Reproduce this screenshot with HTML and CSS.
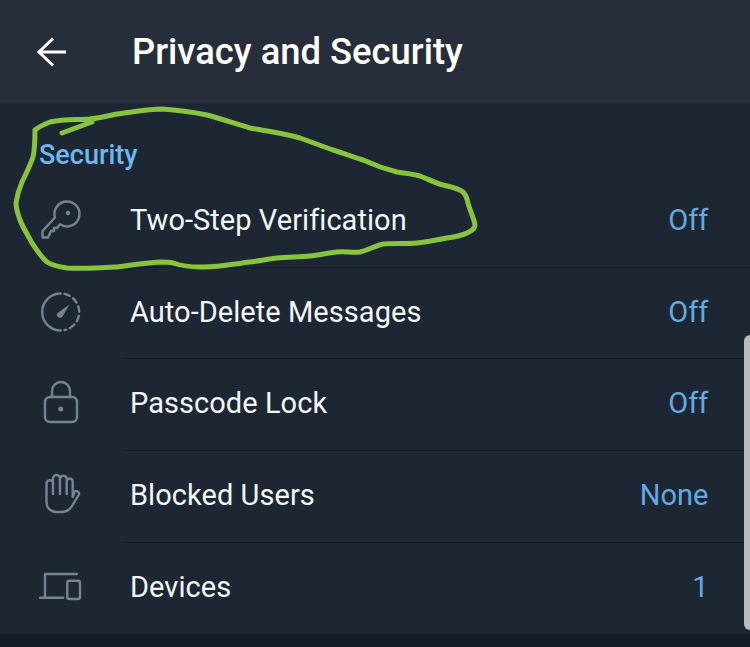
FILE: index.html
```html
<!DOCTYPE html>
<html lang="en">
<head>
<meta charset="utf-8">
<title>Privacy and Security</title>
<link rel="stylesheet" href="styles.css">
</head>
<body>
<div class="screen">
  <header class="topbar">
    <svg class="back" viewBox="0 0 32 32" aria-hidden="true"><path d="M2 16H30M17 2.500 3 16l14 13.500"/></svg>
    <h1 class="title">Privacy and Security</h1>
  </header>
  <main class="section">
    <h2 class="section-title">Security</h2>
    <div class="row">
      <svg class="icon" viewBox="0 0 44 48" aria-hidden="true"><path d="M21 26.300 18 30H15V33H12L9 39.500H3.500V33L16 19.500A12.500 12.500 0 1 1 21 26.300Z"/><circle class="fill" cx="29" cy="15" r="2.200"/></svg>
      <div class="row-body"><span class="label">Two-Step Verification</span><span class="value">Off</span></div>
    </div>
    <div class="row">
      <svg class="icon" viewBox="0 0 44 48" aria-hidden="true"><path d="M21.700 3.500A18.500 18.500 0 0 0 21.700 40.500"/><path stroke-dasharray="5.500 4.200" d="M25.500 3.900A18.500 18.500 0 0 1 25.500 40.100"/><path class="fill" d="M30.500 14.500 23.500 26.500A3 3 0 0 1 18.500 23Z"/></svg>
      <div class="row-body"><span class="label">Auto-Delete Messages</span><span class="value">Off</span></div>
    </div>
    <div class="row">
      <svg class="icon" viewBox="0 0 44 48" aria-hidden="true"><rect x="6" y="16" width="32" height="25" rx="5"/><path d="M13 16V10A9 9 0 0 1 31 10V16"/><circle class="fill" cx="21.700" cy="28" r="2.500"/></svg>
      <div class="row-body"><span class="label">Passcode Lock</span><span class="value">Off</span></div>
    </div>
    <div class="row">
      <svg class="icon" viewBox="0 0 44 48" aria-hidden="true"><path d="M7.500 24V10.500A3.250 3.250 0 0 1 14 10.500V5.500A3.500 3.500 0 0 1 21 5.500 3.400 3.400 0 0 1 27.700 5.500V8.500A3 3 0 0 1 33.700 8.500V24L35.500 19A2.600 2.600 0 0 1 39.700 22L33 33C30.500 37 27 39 23 39H17A9.500 9.500 0 0 1 7.500 29.500ZM14 10.500V21M21 5.500V21M27.700 6V21"/></svg>
      <div class="row-body"><span class="label">Blocked Users</span><span class="value">None</span></div>
    </div>
    <div class="row last">
      <svg class="icon" viewBox="0 0 44 48" aria-hidden="true"><path d="M37.700 9H6V32.700M1 32.700H24.300"/><rect x="28.300" y="15.700" width="12.700" height="18.300" rx="2"/></svg>
      <div class="row-body"><span class="label">Devices</span><span class="value">1</span></div>
    </div>
  </main>
  <div class="scrollbar"></div>
  <svg class="scribble" viewBox="0 0 750 647" aria-hidden="true"><path d="M62 133 92 122M92 122 90 119M35 130C40 126 45 124 50 122C65 119 78 120 90 119C100 118 108 116 117 114C133 112 148 109 163 109C178 110 192 112 207 115C222 119 236 124 250 128C267 131 283 133 300 138C311 142 322 146 333 150C343 153 353 157 363 160C374 165 385 169 397 172C405 173 412 174 420 176C428 179 435 183 443 185C451 187 458 188 463 192C467 196 467 199 468 203C470 211 474 218 475 225C475 229 471 231 467 233C461 236 454 237 447 238C437 240 427 242 417 243C406 244 394 243 383 244C375 246 368 250 360 252C352 253 345 251 337 252C328 253 319 255 310 256C299 257 288 257 277 258C268 259 259 261 250 262C233 264 216 268 200 267C191 267 182 266 173 263C169 262 164 262 160 262C146 263 131 265 117 267C100 268 84 269 67 268C60 267 53 266 47 262C41 257 37 250 32 243C28 235 23 228 20 220C18 214 16 209 16 203C17 196 19 189 22 182C26 174 30 166 33 157C35 148 35 139 35 130"/></svg>
</div>
</body>
</html>
```
FILE: styles.css
```css
* { box-sizing: border-box; }
html, body { margin: 0; padding: 0; }
body { width: 750px; height: 647px; overflow: hidden; background: #151c25; font-family: Roboto, "Liberation Sans", sans-serif; }
.screen { position: relative; width: 750px; height: 647px; overflow: hidden; }
.topbar { display: flex; align-items: center; height: 103px; padding-left: 36px; background: #262e3c; }
.back { width: 32px; height: 32px; fill: none; stroke: #fff; stroke-width: 3; margin-right: 64px; }
.title { margin: 0; font-size: 36.400px; font-weight: 500; color: #fff; }
.section { height: 531px; background: #1d2733; }
.section-title { margin: 0; height: 73px; padding: 36px 0 0 39px; font-size: 27px; line-height: 32px; font-weight: 500; color: #6cb8f5; }
.row { display: flex; height: 91.700px; padding-left: 39px; }
.icon { flex: none; align-self: center; width: 44px; height: 48px; margin-right: 42px; fill: none; stroke: #768392; stroke-width: 2.400; stroke-linecap: round; stroke-linejoin: round; }
.icon .fill { fill: #768392; stroke: none; }
.row-body { flex: 1; display: flex; align-items: center; justify-content: space-between; padding: 0 41.500px 2.500px 5px; border-bottom: 1px solid #151c25; font-size: 29px; letter-spacing: 0.050px; }
.last .row-body { border-bottom: 0; }
.label { color: #f4f6f8; }
.value { color: #64a9e0; }
.scrollbar { position: absolute; left: 744px; top: 335px; width: 6px; height: 295px; border-radius: 6px 0 0 6px; background: #b9bcbf; }
.scribble { position: absolute; left: 0; top: 0; width: 750px; height: 647px; fill: none; stroke: #88c33e; stroke-width: 5; stroke-linecap: round; stroke-linejoin: round; pointer-events: none; }
```
